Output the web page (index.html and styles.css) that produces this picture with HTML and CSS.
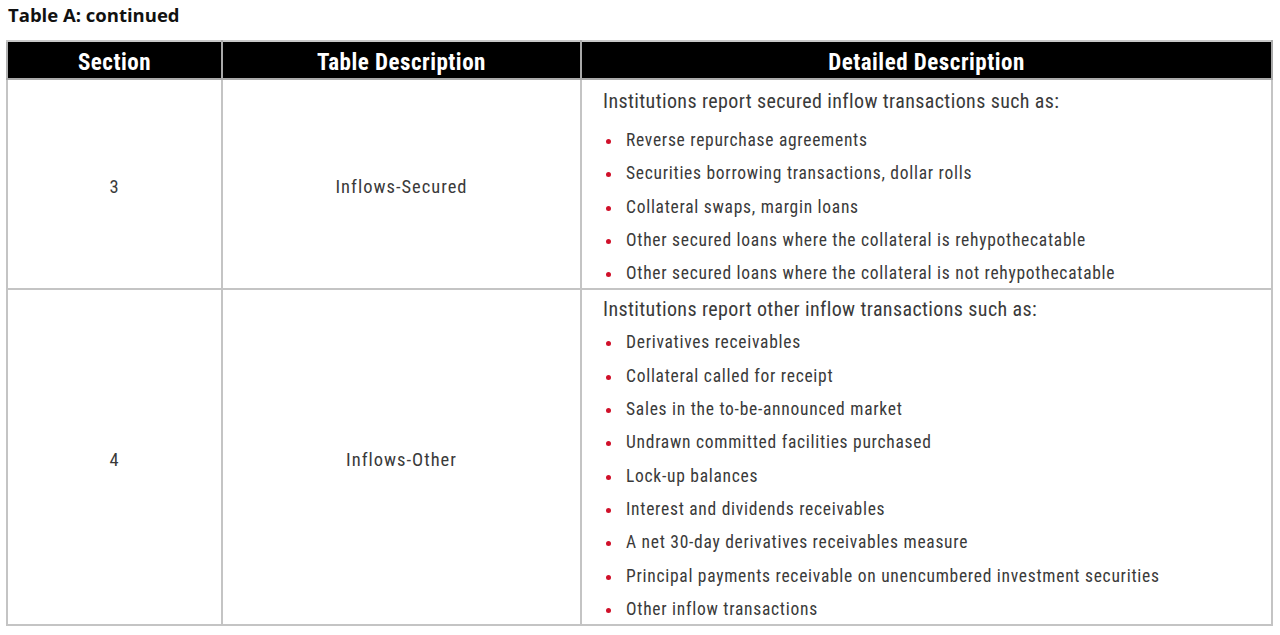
FILE: index.html
```html
<!DOCTYPE html>
<html>
<head>
<meta charset="utf-8">
<link rel="stylesheet" href="styles.css">
</head>
<body>
<div class="page">
  <h1 class="title">Table A: continued</h1>
  <table class="tbl">
    <colgroup>
      <col class="c1"><col class="c2"><col class="c3">
    </colgroup>
    <thead>
      <tr>
        <th>Section</th>
        <th>Table Description</th>
        <th>Detailed Description</th>
      </tr>
    </thead>
    <tbody>
      <tr class="r1">
        <td class="center">3</td>
        <td class="center">Inflows-Secured</td>
        <td class="detail">
          <p class="intro intro-a">Institutions report secured inflow transactions such as:</p>
          <ul class="bullets">
            <li>Reverse repurchase agreements</li>
            <li>Securities borrowing transactions, dollar rolls</li>
            <li>Collateral swaps, margin loans</li>
            <li>Other secured loans where the collateral is rehypothecatable</li>
            <li>Other secured loans where the collateral is not rehypothecatable</li>
          </ul>
        </td>
      </tr>
      <tr class="r2">
        <td class="center">4</td>
        <td class="center">Inflows-Other</td>
        <td class="detail">
          <p class="intro intro-b">Institutions report other inflow transactions such as:</p>
          <ul class="bullets">
            <li>Derivatives receivables</li>
            <li>Collateral called for receipt</li>
            <li>Sales in the to-be-announced market</li>
            <li>Undrawn committed facilities purchased</li>
            <li>Lock-up balances</li>
            <li>Interest and dividends receivables</li>
            <li>A net 30-day derivatives receivables measure</li>
            <li>Principal payments receivable on unencumbered investment securities</li>
            <li>Other inflow transactions</li>
          </ul>
        </td>
      </tr>
    </tbody>
  </table>
</div>
</body>
</html>
```
FILE: styles.css
```css
html, body {
  margin: 0;
  padding: 0;
  background: #ffffff;
}
.page {
  padding: 3px 0 0 6px;
}
.title {
  margin: 0 0 0 2px;
  font-family: "Open Sans", sans-serif;
  font-weight: 700;
  font-size: 18.5px;
  line-height: 24px;
  color: #111;
}
.tbl {
  margin-top: 13px;
  border-collapse: collapse;
  width: 1265px;
  table-layout: fixed;
  font-family: "Roboto Condensed", "Liberation Sans Narrow", Roboto, sans-serif;
}
.c1 { width: 215px; }
.c2 { width: 359px; }
.c3 { width: 691px; }
.tbl th {
  background: #000;
  color: #fff;
  font-weight: 700;
  font-size: 23px;
  line-height: 28px;
  height: 29px;
  padding: 7px 0 0 0;
  border: 2px solid #a9a9a9;
  border-top-color: #c8c8c8;
  border-left-color: #b0b0b0;
  text-align: center;
  vertical-align: top;
  letter-spacing: 0.5px;
}
.tbl th + th {
  border-left-color: #6a6a6a;
}
.tbl td {
  border: 2px solid #c4c4c4;
  padding: 0;
  color: #3a3a3a;
  font-size: 18.5px;
  font-weight: 400;
  vertical-align: middle;
  letter-spacing: 1px;
}
.tbl td.center {
  text-align: center;
  padding-top: 5px;
}
.detail {
  padding: 0 0 0 21px !important;
  vertical-align: top !important;
}
.r1 .detail { height: 207px; }
.r2 .detail { height: 333px; }
.intro {
  margin: 0;
  font-size: 20px;
  line-height: 26px;
  letter-spacing: 0.39px;
}
.intro-a { margin-top: 8px; margin-bottom: 8px; }
.intro-b { margin-top: 6px; margin-bottom: 2px; }
.bullets {
  list-style: none;
  margin: 0;
  padding: 0;
}
.bullets li {
  position: relative;
  padding: 4px 0 0 23px;
  font-size: 17.5px;
  line-height: 29.3px;
  letter-spacing: 0.72px;
}
.bullets li::before {
  content: "";
  position: absolute;
  left: 3px;
  top: 17px;
  width: 5px;
  height: 5px;
  border-radius: 50%;
  background: #d0102a;
}
```
